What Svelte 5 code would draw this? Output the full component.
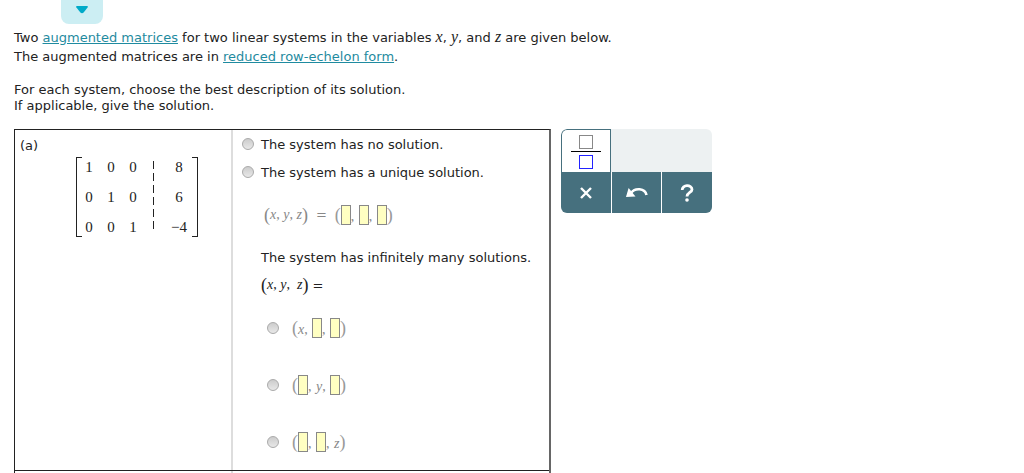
<script>
  const matrix = [
    [1, 0, 0, "8"],
    [0, 1, 0, "6"],
    [0, 0, 1, "−4"],
  ];

  // null marks an answer box, anything else is a free variable
  const families = [
    { id: "free-x", parts: ["x", null, null] },
    { id: "free-y", parts: [null, "y", null] },
    { id: "free-z", parts: [null, null, "z"] },
  ];

  let choice = $state("");
</script>

{#snippet tuple(parts, id)}
  <span class="tuple">
    <span class="paren">(</span>
    {#each parts as part, i}
      <span class="part" class:var={part} class:last={i === parts.length - 1}>
        {#if part}
          <i>{part}</i>
        {:else}
          <input class="box" type="text" aria-label="{id} entry {i + 1}" />
        {/if}
        {#if i < parts.length - 1}<span class="comma">,</span>{/if}
      </span>
    {/each}
    <span class="paren">)</span>
  </span>
{/snippet}

<div class="page">
  <button class="toggle" aria-label="Expand">
    <svg width="12" height="8" viewBox="0 0 12 8">
      <path d="M1.200 0h9.600q1.800 0 .8 1.400L7.600 6.600Q6 8 4.400 6.600L.4 1.400Q-.6 0 1.200 0z" fill="#00aac8" />
    </svg>
  </button>

  <div class="intro">
    <p>
      Two <a href="#matrices">augmented matrices</a> for two linear systems in the variables
      <i>x</i>, <i>y</i>, and <i>z</i> are given below.
    </p>
    <p>The augmented matrices are in <a href="#rref">reduced row-echelon form</a>.</p>
  </div>
  <p class="task">
    For each system, choose the best description of its solution.<br />
    If applicable, give the solution.
  </p>

  <main class="work">
    <div class="problems">
      <section class="problem">
        <div class="given">
          <span class="part-name">(a)</span>
          <div class="matrix">
            <table>
              <tbody>
                {#each matrix as row}
                  <tr>
                    {#each row as cell}<td>{cell}</td>{/each}
                  </tr>
                {/each}
              </tbody>
            </table>
          </div>
        </div>

        <div class="choices">
          <label class="row">
            <input type="radio" name="sys-a" value="none" bind:group={choice} />
            The system has no solution.
          </label>
          <label class="row">
            <input type="radio" name="sys-a" value="unique" bind:group={choice} />
            The system has a unique solution.
          </label>
          <div class="unique">
            <span class="lhs">
              <span class="paren">(</span><i>x</i>, <i>y</i>, <i>z</i><span class="paren">)</span>
            </span>
            <span class="eq">=</span>
            {@render tuple([null, null, null], "unique")}
          </div>
          <div class="row indent">The system has infinitely many solutions.</div>
          <div class="row indent">
            <span class="lhs">
              <span class="paren">(</span><i>x</i>, <i>y</i>, &nbsp;<i>z</i><span class="paren">)</span>
            </span>
            <span>=</span>
          </div>
          {#each families as f}
            <div class="family">
              <input type="radio" name="sys-a" value={f.id} aria-label={f.id} bind:group={choice} />
              {@render tuple(f.parts, f.id)}
            </div>
          {/each}
        </div>
      </section>

      <section class="problem">
        <div class="given next"></div>
        <div class="choices"></div>
      </section>
    </div>

    <aside class="palette">
      <div class="symbols">
        <button aria-label="Fraction">
          <svg width="30" height="36" viewBox="0 0 30 36" fill="none">
            <rect x="8.5" y="1.5" width="13" height="13" stroke="#888" />
            <path d="M0 17.5h30" stroke="#000" />
            <rect x="8.5" y="21.5" width="13" height="13" stroke="#22f" />
          </svg>
        </button>
      </div>
      <div class="tools">
        <button aria-label="Clear">
          <svg width="12" height="12" viewBox="0 0 12 12">
            <path d="M1 1l10 10M11 1L1 11" stroke="#fff" stroke-width="2.400" />
          </svg>
        </button>
        <button aria-label="Undo">
          <svg width="22" height="12" viewBox="0 0 22 12">
            <path d="M5 6C9 .5 19 1 20.500 8" stroke="#fff" stroke-width="2.600" fill="none" />
            <path d="M2.600 1L0 10L9.500 9.500z" fill="#fff" />
          </svg>
        </button>
        <button aria-label="Help">
          <svg width="14" height="18" viewBox="0 0 14 18">
            <path d="M2.200 6C2 .4 12 .4 12 5.400C12 8.500 7 8.500 7 12.500" stroke="#fff" stroke-width="2.800" fill="none" />
            <circle cx="7" cy="16" r="1.800" fill="#fff" />
          </svg>
        </button>
      </div>
    </aside>
  </main>
</div>

<style>
  :global(body) { margin: 0; background: #fff; }
  .page {
    display: flex; flex-direction: column; padding: 0 14px;
    font-family: "DejaVu Sans", Verdana, sans-serif; font-size: 13px; color: #222;
  }
  button { border: 0; padding: 0; cursor: pointer; }
  i { font-family: "Liberation Serif", "Times New Roman", serif; font-size: 16px; line-height: 16px; }

  .toggle {
    display: flex; justify-content: center; align-items: center;
    width: 42px; height: 24px; margin-left: 47px; padding-bottom: 4px;
    background: #cceef3; border-radius: 0 0 8px 8px;
  }

  p { margin: 0; }
  .intro { padding-top: 4px; line-height: 19px; }
  .task { padding-top: 16px; line-height: 16px; }
  a { color: #1f8ba0; }

  .work { display: flex; align-items: flex-start; gap: 10px; padding-top: 15px; }
  .problems {
    flex: 0 1 537px; box-sizing: border-box;
    border: 1px solid #222; border-right: 2px solid #666; border-bottom: 0;
  }
  .problem { display: flex; }
  .problem + .problem { border-top: 1px solid #222; }
  .given { flex: 0 0 216px; border-right: 2px solid #ddd; }
  .next { height: 2px; }
  .part-name { display: block; padding: 7px 0 0 5px; line-height: 18px; }

  .matrix {
    position: relative; display: flex; align-items: center;
    width: 122px; height: 80px; margin: 2px 0 0 61px;
    font-family: "Liberation Serif", "Times New Roman", serif; font-size: 15px;
  }
  .matrix::before, .matrix::after {
    content: ""; position: absolute; top: 0; bottom: 0; width: 6px;
    box-sizing: border-box; border: 1px solid #222;
  }
  .matrix::before { left: 0; border-right: 0; }
  .matrix::after { right: 0; border-left: 0; }
  table {
    border-collapse: collapse; margin-left: 2px;
    background: repeating-linear-gradient(#222 0 8px, transparent 8px 12px) 75px 9px / 1px 72px no-repeat;
  }
  td { width: 22px; height: 30px; padding: 0; text-align: center; line-height: 16px; }
  td:last-child { width: 34px; padding-left: 18px; }

  .choices { flex: 1; padding-left: 9px; }
  .row { display: flex; align-items: center; gap: 7px; height: 28px; }
  .indent { padding-left: 19px; gap: 4px; }
  .unique {
    display: flex; align-items: center; height: 57px; padding-left: 22px; color: #888;
  }
  .eq { padding: 0 8px; }
  .lhs {
    display: flex; align-items: center; white-space: pre;
    font-family: "Liberation Serif", "Times New Roman", serif; font-size: 14px;
  }
  .lhs i { font-size: 14px; }
  .paren {
    font-family: "Liberation Serif", "Times New Roman", serif; font-size: 18px; line-height: 20px;
  }
  .family {
    display: flex; align-items: center; gap: 13px; height: 57px; padding-left: 25px; color: #888;
  }

  .tuple { display: flex; align-items: center; }
  .tuple .paren { width: 6px; font-size: 18px; color: #999; }
  .part { display: flex; align-items: flex-end; width: 18px; height: 20px; }
  .part.var { width: 14px; }
  .part.last { width: auto; }
  .part i { font-size: 14px; line-height: 16px; }
  .comma { font-family: "Liberation Serif", serif; font-size: 14px; line-height: 16px; }
  .box {
    width: 10px; height: 20px; box-sizing: border-box; padding: 0;
    border: 1px solid #888; border-radius: 0; background: #ffffc2; font-size: 12px;
  }

  input[type="radio"] {
    appearance: none; width: 12px; height: 12px; margin: 0; box-sizing: border-box;
    border: 1px solid #aaa; border-radius: 50%; background: linear-gradient(#ccc, #e8e8e8);
  }
  input[type="radio"]:checked { background: radial-gradient(#333 0 3px, #e8e8e8 4px); }

  .palette {
    flex: 0 0 151px; background: #edf1f2; border-radius: 6px; overflow: hidden;
  }
  .symbols { display: flex; }
  .symbols button {
    display: flex; align-items: center; justify-content: center; width: 50px; height: 43px;
    box-sizing: border-box; padding-top: 2px; background: #fff;
    border: 1px solid #46707e; border-bottom: 0; border-radius: 6px 0 0 0;
  }
  .tools { display: flex; gap: 1px; background: #fff; }
  .tools button {
    flex: 1; display: flex; align-items: center; justify-content: center; height: 41px;
    background: #46707e;
  }
</style>
